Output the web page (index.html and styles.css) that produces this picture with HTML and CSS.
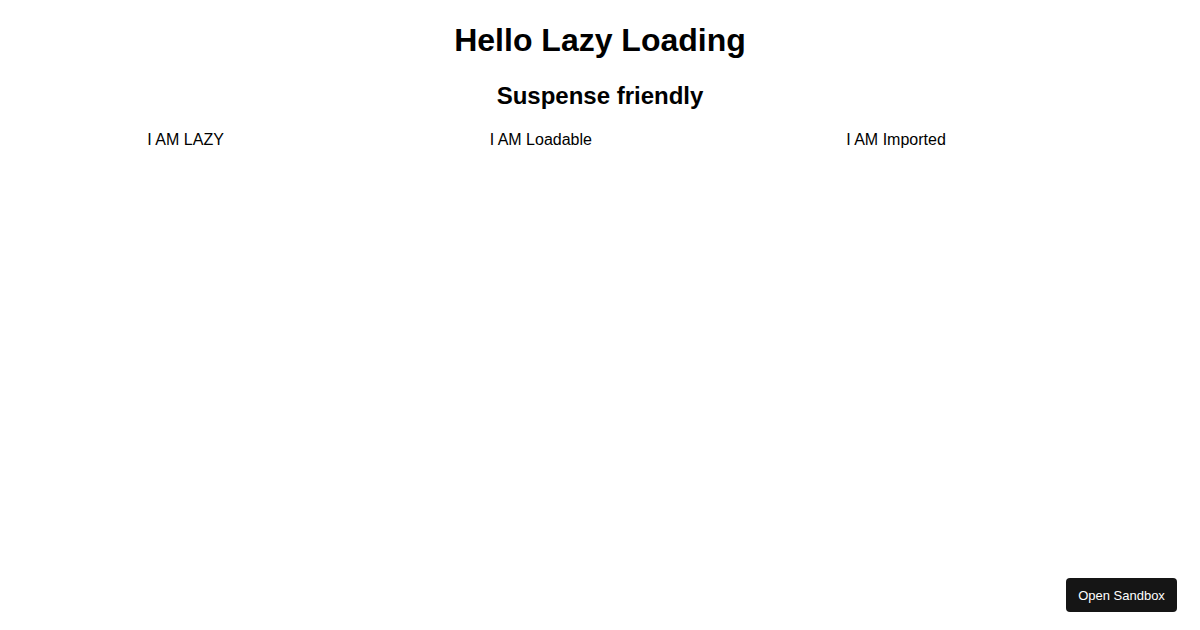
FILE: index.html
```html
<!DOCTYPE html>
<html>
<head>
<meta charset="utf-8">
<link rel="stylesheet" href="styles.css">
</head>
<body>
<div class="app">
  <h1 class="title">Hello Lazy Loading</h1>
  <h2 class="subtitle">Suspense friendly</h2>
  <div class="row">
    <div class="cell">I AM LAZY</div>
    <div class="cell">I AM Loadable</div>
    <div class="cell">I AM Imported</div>
  </div>
</div>
<a class="sandbox-btn">Open Sandbox</a>
</body>
</html>
```

FILE: styles.css
```css
html, body {
  background: #ffffff;
}
body {
  margin: 8px;
  font-family: "Liberation Sans", Arial, Helvetica, sans-serif;
  color: #000000;
}
.app {
  text-align: center;
}
.title {
  font-size: 32px;
  font-weight: bold;
  margin: 14px 0 23px;
}
.subtitle {
  font-size: 24px;
  font-weight: bold;
  margin: 0 0 21px;
}
.row {
  width: 90%;
  display: grid;
  grid-template-columns: 1fr 1fr 1fr;
  font-size: 16px;
}
.cell {
  text-align: center;
}
.sandbox-btn {
  position: fixed;
  right: 23px;
  bottom: 18px;
  width: 111px;
  height: 34px;
  box-sizing: border-box;
  display: flex;
  align-items: center;
  justify-content: center;
  background: #151515;
  color: #ffffff;
  border-radius: 4px;
  font-size: 13px;
  font-family: "Liberation Sans", Arial, Helvetica, sans-serif;
}
```
